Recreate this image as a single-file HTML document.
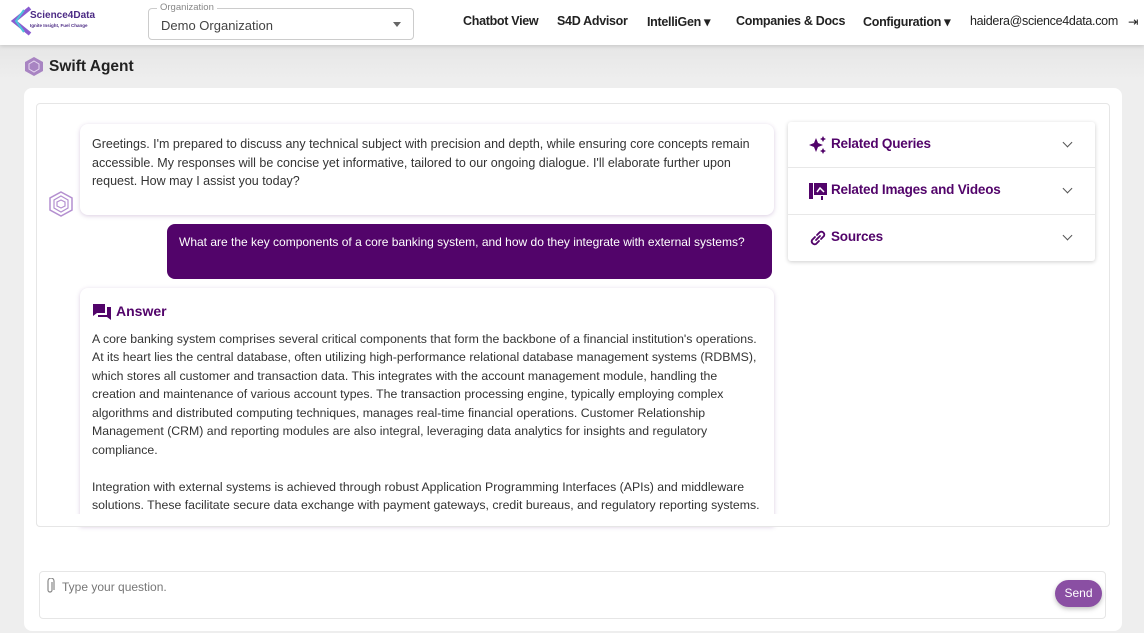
<!DOCTYPE html>
<html><head><meta charset="utf-8"><style>
*{box-sizing:border-box;margin:0;padding:0}
html,body{width:1144px;height:633px;overflow:hidden}
body{font-family:"Liberation Sans",sans-serif;background:linear-gradient(#dcdcdc,#eeeeee 80px,#eeeeee);position:relative;color:#333}
.nav{position:absolute;left:0;top:0;width:1144px;height:45px;background:#fff;box-shadow:0 1px 4px rgba(0,0,0,.15)}
.nav a{position:absolute;top:14px;font-size:12.5px;color:#222;font-weight:bold;letter-spacing:-.3px}
.org{position:absolute;left:148px;top:8px;width:266px;height:32px;border:1px solid #ccc;border-radius:4px}
.org .lab{position:absolute;left:8px;top:-7px;background:#fff;padding:0 3px;font-size:9.5px;color:#888}
.org .val{position:absolute;left:12px;top:9px;font-size:13px;color:#444}
.org .ar{position:absolute;right:12px;top:13px;border:4px solid transparent;border-top:5px solid #666}
.title{position:absolute;left:49px;top:58px;font-size:15.5px;font-weight:bold;color:#222}
.main{position:absolute;left:24px;top:88px;width:1098px;height:543px;background:#fff;border-radius:8px}
.inner{position:absolute;left:36px;top:103px;width:1074px;height:424px;border:1px solid #e6e6e6;border-radius:4px;background:#fff}
.bub{position:absolute;background:#fff;border-radius:8px;box-shadow:0 1px 4px rgba(110,60,140,.25);font-size:12.5px;line-height:18.5px;color:#333;letter-spacing:0}
.user{position:absolute;left:167px;top:224px;width:605px;height:55px;background:#52046a;border-radius:8px;color:#fff;font-size:12px;padding:11px 12px}
.side{position:absolute;left:788px;top:122px;width:307px;height:139px;background:#fff;box-shadow:0 1px 4px rgba(0,0,0,.2);border-radius:3px}
.row{height:46.3px;border-bottom:1px solid #e8e8e8;position:relative;font-size:13.5px;font-weight:bold;color:#52046a}
.row:last-child{border:none}
.row span{position:absolute;left:43px;top:14px;letter-spacing:-.2px}
.row svg.i{position:absolute;left:20px;top:13px}
.chev{position:absolute;right:24px;top:17px;width:7px;height:7px;border-right:1.6px solid #555;border-bottom:1.6px solid #555;transform:rotate(45deg)}
.input{position:absolute;left:39px;top:571px;width:1067px;height:48px;border:1px solid #e6e6e6;border-radius:4px;background:#fff}
.send{position:absolute;left:1055px;top:580px;width:47px;height:27px;border-radius:14px;background:#8a4fa3;color:#fff;font-size:12px;text-align:center;line-height:27px;box-shadow:0 2px 5px rgba(0,0,0,.25)}
.ans{white-space:nowrap}
</style></head><body>
<div class="nav">
 <svg style="position:absolute;left:10px;top:6px" width="24" height="30" viewBox="0 0 24 30"><path d="M20 2 L4 15 L20 28" fill="none" stroke="#8a5cd0" stroke-width="4"/><path d="M14 4 L6 15 L14 26" fill="none" stroke="#4cc3d9" stroke-width="2"/></svg>
 <div style="position:absolute;left:30px;top:10px;font-size:10px;font-weight:bold;color:#4b2a84">Science4Data</div>
 <div style="position:absolute;left:30px;top:23px;font-size:4.5px;color:#4b2a84;font-weight:bold">Ignite Insight, Fuel Change</div>
 <div class="org"><div class="lab">Organization</div><div class="val">Demo Organization</div><div class="ar"></div></div>
 <a style="left:463px">Chatbot View</a>
 <a style="left:557px">S4D Advisor</a>
 <a style="left:647px">IntelliGen ▾</a>
 <a style="left:736px">Companies &amp; Docs</a>
 <a style="left:863px">Configuration ▾</a>
 <a style="left:970px;font-weight:normal">haidera@science4data.com</a>
 <a style="left:1128px;font-weight:normal">⇥</a>
</div>
<svg style="position:absolute;left:24px;top:56px" width="20" height="21" viewBox="0 0 20 21"><path d="M10 1 L19 6 L19 15 L10 20 L1 15 L1 6Z" fill="#a884c2"/><path d="M10 5 L15 8 L15 13 L10 16 L5 13 L5 8Z" fill="none" stroke="#e6d8f0" stroke-width="1"/></svg>
<div class="title">Swift Agent</div>
<div class="main"></div>
<div class="inner"></div>
<div class="bub" style="left:80px;top:124px;width:694px;height:91px;padding:11px 12px">Greetings. I'm prepared to discuss any technical subject with precision and depth, while ensuring core concepts remain accessible. My responses will be concise yet informative, tailored to our ongoing dialogue. I'll elaborate further upon request. How may I assist you today?</div>
<svg style="position:absolute;left:49px;top:191px" width="24" height="26" viewBox="0 0 24 26"><path d="M12 1 L23 7 L23 19 L12 25 L1 19 L1 7Z" fill="none" stroke="#b48fd0" stroke-width="1.5"/><path d="M12 5 L19 9 L19 17 L12 21 L5 17 L5 9Z" fill="none" stroke="#b48fd0" stroke-width="1.2"/><path d="M12 9 L16 11 L16 15 L12 17 L8 15 L8 11Z" fill="none" stroke="#b48fd0" stroke-width="1.2"/></svg>
<div class="user">What are the key components of a core banking system, and how do they integrate with external systems?</div>
<div class="bub ans" style="left:80px;top:288px;width:694px;height:238px;padding:14px 12px;overflow:hidden;border-radius:8px 8px 0 0;font-size:12.3px">
 <div style="font-size:14px;font-weight:bold;color:#52046a;margin-bottom:9px;padding-left:24px;position:relative"><svg style="position:absolute;left:0;top:1px" width="20" height="18" viewBox="0 0 20 18"><path d="M1 1h12v9H5l-4 3z" fill="#52046a"/><path d="M15 4h4v13l-4-3H6v-2h9z" fill="#52046a"/></svg>Answer</div>
 A core banking system comprises several critical components that form the backbone of a financial institution's operations.<br>At its heart lies the central database, often utilizing high-performance relational database management systems (RDBMS),<br>which stores all customer and transaction data. This integrates with the account management module, handling the<br>creation and maintenance of various account types. The transaction processing engine, typically employing complex<br>algorithms and distributed computing techniques, manages real-time financial operations. Customer Relationship<br>Management (CRM) and reporting modules are also integral, leveraging data analytics for insights and regulatory<br>compliance.<br><br>Integration with external systems is achieved through robust Application Programming Interfaces (APIs) and middleware<br>solutions. These facilitate secure data exchange with payment gateways, credit bureaus, and regulatory reporting systems.
</div>
<div style="position:absolute;left:36px;top:514px;width:1074px;height:13px;background:#fff;border:1px solid #e6e6e6;border-top:none;border-radius:0 0 4px 4px"></div>
<div class="side">
 <div class="row"><svg class="i" width="20" height="20" viewBox="0 0 20 20"><path d="M8 3l2 5 5 2-5 2-2 5-2-5-5-2 5-2z" fill="#52046a"/><path d="M15 1l1 2 2 1-2 1-1 2-1-2-2-1 2-1z M15 13l1 2 2 1-2 1-1 2-1-2-2-1 2-1z" fill="#52046a"/></svg><span>Related Queries</span><div class="chev"></div></div>
 <div class="row"><svg class="i" width="20" height="20" viewBox="0 0 20 20"><rect x="1" y="2" width="4" height="16" fill="#52046a"/><rect x="6" y="2" width="13" height="12" fill="#52046a"/><path d="M9 11l3-4 4 4" stroke="#fff" stroke-width="1.5" fill="none"/><path d="M14 15v4" stroke="#52046a" stroke-width="2"/></svg><span>Related Images and Videos</span><div class="chev"></div></div>
 <div class="row"><svg class="i" width="20" height="20" viewBox="0 0 20 20"><path d="M8 12l4-4M7 9l-3 3a3 3 0 004 4l3-3M13 11l3-3a3 3 0 00-4-4l-3 3" stroke="#52046a" stroke-width="1.8" fill="none" stroke-linecap="round"/></svg><span>Sources</span><div class="chev"></div></div>
</div>
<div class="input"><svg style="position:absolute;left:6px;top:6px" width="9" height="16" viewBox="0 0 9 16"><path d="M6 4v8a2 2 0 01-4 0V3a3 3 0 016 0v9" stroke="#888" stroke-width="1.2" fill="none"/></svg><div style="position:absolute;left:22px;top:8px;font-size:12px;color:#777">Type your question.</div></div>
<div class="send">Send</div>
</body></html>
